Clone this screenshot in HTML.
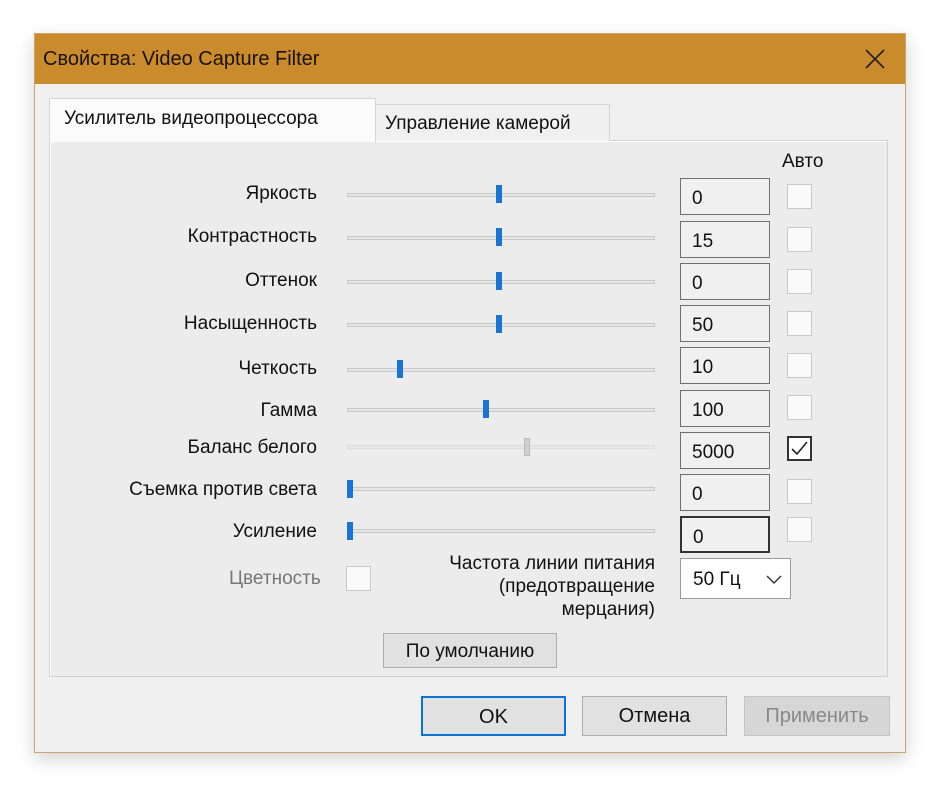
<!DOCTYPE html>
<html><head><meta charset="utf-8"><style>
*{margin:0;padding:0;box-sizing:border-box}
body{width:948px;height:798px;background:#fff;position:relative;overflow:hidden;font-family:"Liberation Sans","DejaVu Sans",sans-serif;font-size:19px;color:#111}
.win{position:absolute;left:34px;top:33px;width:872px;height:720px;background:#f0f0f0;border:1px solid #c9a56a;box-shadow:0 6px 18px rgba(0,0,0,.18)}
.title{position:absolute;left:0;top:0;width:870px;height:50px;background:#c98b2b;color:#1a1208;font-size:20px;line-height:50px;padding-left:8px}
.a{position:absolute}
.tab1{left:49px;top:98px;width:327px;height:44px;background:#fbfbfb;border:1px solid #d4d4d4;border-bottom:none;padding:9px 0 0 14px;z-index:2}
.tab2{left:375px;top:104px;width:235px;height:37px;background:#f0f0f0;border:1px solid #d4d4d4;border-bottom:none;padding:8px 0 0 9px}
.panel{left:49px;top:140px;width:839px;height:537px;background:#ececec;border:1px solid #d0d0d0;box-shadow:inset 1px 1px 0 #fff}
.lbl{position:absolute;right:631px;text-align:right;white-space:nowrap}
.trk{position:absolute;left:347px;width:308px;height:4px;border:1px solid #c8c8c8;background:#e6e6e6}
.th{position:absolute;width:6px;height:18px;background:#1a74d4}
.ed{position:absolute;left:680px;width:90px;height:37px;border:1px solid #6f6f6f;background:#f0f0f0;padding:9px 0 0 11px}
.cb{position:absolute;left:787px;width:25px;height:25px;border:1px solid #c8c8c8;background:#fafafa}
.btn{position:absolute;top:696px;height:40px;border:1px solid #adadad;background:#e1e1e1;text-align:center;line-height:38px;font-size:20px}
</style></head><body>
<div class="win"><div class="title">Свойства: Video Capture Filter<svg width="20" height="20" viewBox="0 0 20 20" style="position:absolute;left:830px;top:15px"><path d="M1 1 L19 19 M19 1 L1 19" stroke="#222" stroke-width="1.6"/></svg></div></div>
<div class="a panel"></div>
<div class="a tab1">Усилитель видеопроцессора</div>
<div class="a tab2">Управление камерой</div>
<div class="a" style="left:782px;top:151px">Авто</div>

<div class="lbl" style="top:183px">Яркость</div>
<div class="lbl" style="top:226px">Контрастность</div>
<div class="lbl" style="top:270px">Оттенок</div>
<div class="lbl" style="top:313px">Насыщенность</div>
<div class="lbl" style="top:358px">Четкость</div>
<div class="lbl" style="top:400px">Гамма</div>
<div class="lbl" style="top:437px">Баланс белого</div>
<div class="lbl" style="top:479px">Съемка против света</div>
<div class="lbl" style="top:521px">Усиление</div>

<div class="trk" style="top:193px"></div><div class="th" style="left:496px;top:185px"></div>
<div class="trk" style="top:236px"></div><div class="th" style="left:496px;top:228px"></div>
<div class="trk" style="top:280px"></div><div class="th" style="left:496px;top:272px"></div>
<div class="trk" style="top:323px"></div><div class="th" style="left:496px;top:315px"></div>
<div class="trk" style="top:368px"></div><div class="th" style="left:397px;top:360px"></div>
<div class="trk" style="top:408px"></div><div class="th" style="left:483px;top:400px"></div>
<div class="trk" style="top:445px;border-color:#ddd"></div><div class="th" style="left:524px;top:438px;background:#d0d0d0;border:1px solid #bbb"></div>
<div class="trk" style="top:487px"></div><div class="th" style="left:347px;top:480px"></div>
<div class="trk" style="top:529px"></div><div class="th" style="left:347px;top:522px"></div>

<div class="ed" style="top:178px">0</div>
<div class="ed" style="top:221px">15</div>
<div class="ed" style="top:263px">0</div>
<div class="ed" style="top:305px">50</div>
<div class="ed" style="top:347px">10</div>
<div class="ed" style="top:390px">100</div>
<div class="ed" style="top:432px">5000</div>
<div class="ed" style="top:474px">0</div>
<div class="ed" style="top:516px;border:2px solid #333">0</div>

<div class="cb" style="top:184px"></div>
<div class="cb" style="top:227px"></div>
<div class="cb" style="top:269px"></div>
<div class="cb" style="top:311px"></div>
<div class="cb" style="top:353px"></div>
<div class="cb" style="top:395px"></div>
<div class="cb" style="top:436px;border:2px solid #333;background:#fff"><svg width="21" height="21" viewBox="0 0 21 21" style="position:absolute;left:0;top:0"><path d="M3 11 L8 16 L18 4" fill="none" stroke="#222" stroke-width="1.6"/></svg></div>
<div class="cb" style="top:479px"></div>
<div class="cb" style="top:517px"></div>

<div class="a" style="left:229px;top:568px;color:#777">Цветность</div>
<div class="a" style="left:346px;top:566px;width:25px;height:25px;border:1px solid #c8c8c8;background:#fafafa"></div>
<div class="a" style="left:380px;top:552px;width:275px;text-align:right;line-height:23px">Частота линии питания<br>(предотвращение<br>мерцания)</div>
<div class="a" style="left:680px;top:558px;width:111px;height:41px;border:1px solid #999;background:#fff;padding:10px 0 0 12px">50 Гц<svg width="16" height="10" viewBox="0 0 16 10" style="position:absolute;left:85px;top:16px"><path d="M1 1 L8 8 L15 1" fill="none" stroke="#333" stroke-width="1.4"/></svg></div>
<div class="a" style="left:383px;top:633px;width:174px;height:35px;border:1px solid #adadad;background:#e1e1e1;text-align:center;line-height:35px">По умолчанию</div>

<div class="btn" style="left:421px;width:145px;border:2px solid #0a73d6">OK</div>
<div class="btn" style="left:582px;width:145px">Отмена</div>
<div class="btn" style="left:744px;width:146px;color:#888;background:#d6d6d6;border-color:#c4c4c4">Применить</div>
</body></html>
